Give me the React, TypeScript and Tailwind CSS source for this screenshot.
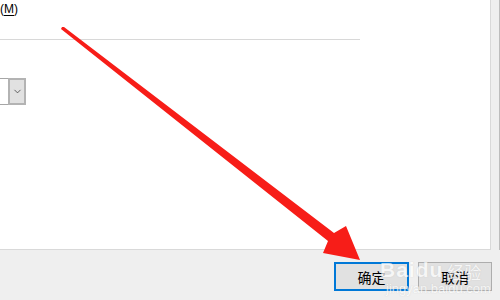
import { ChevronDown } from "lucide-react";

const Arrow = () => (
    <svg
        className="pointer-events-none absolute left-0 top-0"
        width="500"
        height="300"
        viewBox="0 0 500 300"
        aria-hidden="true"
    >
        <polygon
            fill="#f71d18"
            points="62,27 64,27 334,233 346,226 360,260 323,253 328,241 61,29"
        />
    </svg>
);

const Watermark = () => (
    <div
        className="pointer-events-none absolute left-[380px] top-[259px] flex flex-col items-start leading-none text-white"
        style={{ textShadow: "0 0 1px rgba(150,150,150,0.5)" }}
    >
        <div className="flex items-end gap-1 opacity-70">
            <span className="text-[21px] font-bold font-['Liberation_Sans',sans-serif] tracking-[1px]">
                Baidu
            </span>
            <span className="text-[17px] font-['Noto_Sans_CJK_SC',sans-serif]">
                经验
            </span>
        </div>
        <span className="mt-[2px] ml-[6px] text-[13px] font-['Liberation_Sans',sans-serif] opacity-70">
            jingyan.baidu.com
        </span>
    </div>
);

export default function App() {
    return (
        <div className="relative h-[300px] w-[500px] overflow-hidden bg-[#efefef] font-['Noto_Sans_CJK_SC',sans-serif]">
            <div className="flex h-[250px] w-[500px] border-r border-[#bdbdbd]">
                <div className="h-[250px] w-[491px] border-b border-r border-[#d9d9d9] bg-white">
                    <div className="h-[39px] pt-[1px] text-[12px] leading-[17px] text-black font-['Liberation_Sans',sans-serif]">
                        (<span className="underline underline-offset-2">M</span>)
                    </div>
                    <div className="h-px w-[360px] bg-[#d8d8d8]" />
                    <div className="mt-[38px] flex">
                        <div className="h-[27px] w-[8px] border-y border-[#a6a6a6] bg-white" />
                        <div className="flex h-[27px] w-[18px] items-center justify-center border-2 border-[#b3b3b3] bg-[#e1e1e1]">
                            <ChevronDown size={11} strokeWidth={1.6} className="text-[#333]" />
                        </div>
                    </div>
                </div>
            </div>
            <div className="flex justify-end gap-[9px] pr-[8px] pt-[12px]">
                <button
                    type="button"
                    className="h-[29px] w-[75px] border-2 border-[#0078d7] bg-[#e1e1e1] text-[14px] leading-none text-black"
                >
                    确定
                </button>
                <button
                    type="button"
                    className="h-[29px] w-[74px] border border-[#adadad] bg-[#e1e1e1] text-[14px] leading-none text-black"
                >
                    取消
                </button>
            </div>
            <Watermark />
            <Arrow />
        </div>
    );
}
